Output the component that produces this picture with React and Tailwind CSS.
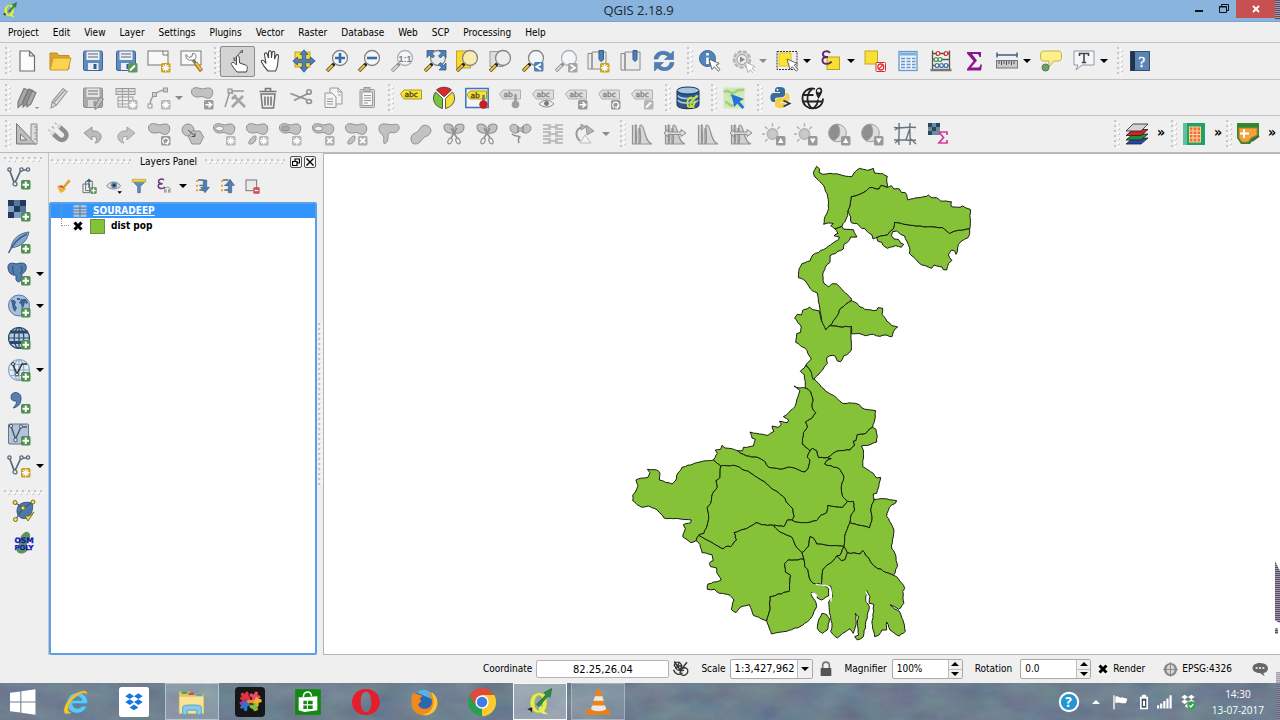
import React from "react";

/* ---------- shared drawing pieces ---------- */

const Svg = ({ children, className = "size-6" }) => (
  <svg viewBox="0 0 24 24" fill="none" aria-hidden="true" className={`shrink-0 ${className}`}>
    {children}
  </svg>
);

const G = "#c2c2c2";
const GD = "#8f8f8f";
const BL = "#4f7fb5";

const blobPath =
  "M1.500 6.500C1 1.500 6 .8 10 2.500c4 1.500 6-1.200 9.500-.5C24 3 23.500 10 20 12c-4 1.500-6-2-9-1.500-3 1-8.500 1-9.500-4Z";

const Badge = ({ fill = "#9a9a9a", x = 14, y = 14, children }) => (
  <g transform={`translate(${x} ${y})`}>
    <rect width="9.500" height="9.500" rx="1.500" fill={fill} />
    {children}
  </g>
);
const Star = ({ fill = "#fff" }) => (
  <path d="M4.750 1v7.500M1 4.750h7.500M2.100 2.100l5.300 5.300M7.400 2.100 2.100 7.400" stroke={fill} strokeWidth="1.300" />
);
const Plus = () => (
  <Badge fill="#4f8f51">
    <path d="M4.750 1.500v6.500M1.500 4.750H8" stroke="#fff" strokeWidth="2" />
  </Badge>
);
const GStar = () => <Badge fill="#b5b5b5"><Star /></Badge>;
const YStar = () => <Badge fill="#c9a21e"><Star /></Badge>;
const GX = () => <Badge fill="#b0b0b0"><path d="m2.200 2.200 5 5m0-5-5 5" stroke="#fff" strokeWidth="1.900" /></Badge>;
const GRight = () => <Badge><path d="M1.500 4.750H7M4.500 2l3 2.750-3 2.750" stroke="#fff" strokeWidth="1.600" /></Badge>;
const GRot = () => <Badge><path d="M3 7.500a3 3 0 1 1 3.500 0M6.800 4.800 6.300 8 3.800 7" stroke="#fff" strokeWidth="1.200" /></Badge>;
const GTri = ({ down }) => (
  <Badge><path d={down ? "M2 2.500h5.500L4.750 7.500Z" : "M2 7h5.500L4.750 2Z"} fill="#fff" /></Badge>
);
const Blob = ({ t }) => <path d={blobPath} transform={t} fill={G} stroke={GD} />;

const Mag = ({ grey, lens = "#f3f6f9" }) => (
  <>
    <path d="m9 15-7 7" stroke={grey ? "#8d8d8d" : "#5c4a22"} strokeWidth="3.600" />
    <path d="m8 16-5.600 5.600" stroke={grey ? "#d7d7d7" : "#eec23d"} strokeWidth="2" />
    <path d="m9.300 14.700-1.600 1.600" stroke={grey ? "#8d8d8d" : "#222"} strokeWidth="3" />
    <circle cx="15" cy="9" r="7.500" fill={lens} stroke={grey ? "#b0b0b0" : "#858585"} strokeWidth="1.300" />
  </>
);
const Cursor = ({ x = 11, y = 10, fill = "#fff", stroke = "#555" }) => (
  <path d={`M${x} ${y}l3 10.500 2.300-2.800 4 4.500 1.700-1.600-4-4.400 3.200-1.700Z`} fill={fill} stroke={stroke} strokeWidth=".9" />
);
const Node3 = ({ c = "#586879" }) => (
  <g stroke={c} strokeWidth="1.200">
    <path d="m2.500 4 5 13.500L14 4h7" strokeWidth="1.700" />
    <circle cx="2.500" cy="3.500" r="1.700" fill="#dfe7ef" />
    <circle cx="8" cy="18" r="2" fill="#dfe7ef" />
    <circle cx="14.500" cy="3.500" r="1.700" fill="#dfe7ef" />
    <circle cx="21" cy="3.500" r="1.700" fill="#dfe7ef" />
  </g>
);
const Floppy = ({ grey }) => (
  <>
    <rect x="2.500" y="2" width="19" height="19.500" rx="1.500" fill={grey ? "#a9a9a9" : "#5f8cc0"} stroke={grey ? "#909090" : "#3f6795"} />
    <rect x="5.500" y="2.500" width="13" height="8.500" fill={grey ? "#e4e4e4" : "#edf0f3"} />
    <path d="M7 5h10M7 8h10" stroke={grey ? "#999" : "#8a929b"} strokeWidth="1.300" />
    <rect x="7" y="14" width="10.500" height="7" fill={grey ? "#d8d8d8" : "#e9eef4"} />
    <rect x="12.500" y="15" width="3" height="5" fill={grey ? "#999" : "#345b88"} />
  </>
);
const Tag = ({ grey, s = "abc" }) => (
  <>
    <path d="M1.500 8 5 4h17.500v9H5Z" fill={grey ? "#dedede" : "#f7e338"} stroke={grey ? "#b0b0b0" : "#b19b17"} />
    <text x="5.500" y="11" fontSize="7.500" fontFamily="DejaVu Sans, sans-serif" fill={grey ? "#7d7d7d" : "#463f12"} stroke={grey ? "#7d7d7d" : "#463f12"} strokeWidth=".3">{s}</text>
  </>
);
const Globe = ({ fill = "#dbe6f1", line = "#486a91" }) => (
  <g stroke={line} strokeWidth="1.200">
    <circle cx="12" cy="12" r="10.500" fill={fill} />
    <ellipse cx="12" cy="12" rx="4.800" ry="10.500" />
    <path d="M1.500 12h21M3.500 6.500h17M3.500 17.500h17M12 1.500v21" />
  </g>
);
const Sheet = ({ color = "#f8f8f8" }) => <rect x="1" y="2" width="20" height="14" fill={color} stroke="#777" />;
const Scissors = () => (
  <g fill={G} stroke={GD} strokeWidth="1.100">
    <path d="M2 5c0-4 7-4 9 0l1 6c-4 1-10-1-10-6ZM22 5c0-4-7-4-9 0l0 6c4 1 9-1 9-6Z" />
    <path d="m15 6-6 10M9 6l6 10" strokeWidth="1.600" />
    <ellipse cx="8" cy="19" rx="2" ry="3" transform="rotate(25 8 19)" fill="#efefef" />
    <ellipse cx="16" cy="19" rx="2" ry="3" transform="rotate(-25 16 19)" fill="#efefef" />
  </g>
);
const Histo = ({ arrows }) => (
  <>
    <path d="M2 22V3h5l2 6 2-6c4 0 3 16 11 19Z" fill={arrows ? "#cfcfcf" : "#d6d6d6"} />
    <path d="M2.500 22V3M5.500 22V2.500M9 22V6M2 22h20M10 22C12 12 8 3 11 3c4 0 3 17 11 19M6 22C8 12 4 3 7 3" stroke="#939393" strokeWidth="1.200" />
    {arrows && <path d="m1 11 4-3.500V10h13V7.500l5 3.500-5 3.500V12.500H5v2.500Z" fill="#dedede" stroke="#8d8d8d" />}
  </>
);
const Sun = () => (
  <g stroke="#b3b3b3" strokeWidth="1.500">
    <circle cx="10.500" cy="12" r="5.200" fill="#c9c9c9" />
    <path d="M10.500 1v3.500M0 12h3M3 4.500 5.500 7M18 4.500 15.500 7M3 19.500 5.500 17" />
  </g>
);
const Contrast = () => (
  <g stroke="#a0a0a0">
    <circle cx="10.500" cy="11" r="8.800" fill="#ddd" />
    <path d="M10.500 2.200a8.800 8.800 0 0 0-4 16.500C14 15 14 8 10.500 2.200Z" fill="#8e8e8e" />
  </g>
);

/* ---------- toolbar icons ---------- */

const icons = {
  new: <path d="M5 2h9.500L19.500 7v15H5ZM14.500 2v5h5" fill="#fcfcfc" stroke="#6f6f6f" strokeWidth="1.200" />,
  open: (
    <>
      <path d="M2 20V4h7l2 2.500h10V20Z" fill="#dba52a" stroke="#be8d1f" />
      <path d="M2 21 5 9h18l-3 12Z" fill="#fad44f" stroke="#c9962a" />
    </>
  ),
  save: <Floppy />,
  saveAs: <><Floppy /><Badge fill="#5b965d"><path d="m2 7.500 5-5" stroke="#fff" strokeWidth="2" /></Badge></>,
  layoutNew: <><Sheet /><path d="M16 2v4h5" stroke="#777" /><YStar /></>,
  layoutMgr: (
    <>
      <Sheet />
      <path d="M6 5.500 9 8.500l3-1 .5-3c4-.5 4 4 2.500 6l-2.500.5c-5 1-7-2-6.500-5.500Z" fill="#fff" stroke="#777" />
      <path d="m13 11 3 3.500" stroke="#777" strokeWidth="3" />
      <path d="m15.500 14 6 8" stroke="#a97922" strokeWidth="4" />
      <path d="m16 14 5 6.800" stroke="#efc047" strokeWidth="2" />
    </>
  ),
  touch: (
    <>
      <path d="M10 22 6 17c-1-2-2.500-3.500-1-4.500 1.500-.7 3 1 4.500 2.500V7c0-2 2.400-2 2.600 0l.6 6 5.800 2c2.500.8 2 3.500 1 7Z" transform="translate(2 1)" fill="#fff" stroke="#444" />
      <path d="M17 1 9 11M15 3.500h2.500V1M9 8v3.500h3" stroke="#555" strokeWidth=".9" />
    </>
  ),
  pan: (
    <path d="M9 22c-3-3-5-6-6.500-9-.8-2 1.500-2.500 3-.5l1.500 2-1.500-9c0-2 2.200-2.300 2.800-.3L9.500 9V3.500c0-2.200 2.700-2.200 2.900 0V9l.8-5.500c.5-2 2.700-1.500 2.600.4L15.500 10 17 6.500c.8-1.700 2.800-1 2.500 1L18.500 16c-.3 3-1 4-2 6Z" fill="#fff" stroke="#444" strokeWidth="1.100" />
  ),
  panSel: (
    <>
      <rect x="3" y="3" width="15" height="15" fill="#f8dc36" stroke="#c0a11d" />
      <path d="m12 .8 4 4.700h-2.300v4.800h4.800V8l4.700 4-4.700 4v-2.300h-4.800v4.800H16L12 23.200l-4-4.700h2.300v-4.800H5.500V16L.8 12l4.700-4v2.300h4.800V5.500H8Z" fill={BL} stroke="#2e5787" strokeWidth=".8" />
    </>
  ),
  zoomIn: <><Mag /><path d="M15 4v10M10 9h10" stroke="#386ca8" strokeWidth="2.600" /></>,
  zoomOut: <><Mag /><path d="M10 9h10" stroke="#386ca8" strokeWidth="2.600" /></>,
  zoomNative: <><Mag grey /><text x="8.500" y="12.500" fontSize="9" fontWeight="bold" fontFamily="Liberation Sans, sans-serif" fill="#7a7a7a">1:1</text></>,
  zoomFull: (
    <>
      <Mag lens="#e8ebee" />
      <path d="M4 1.500h7L8.500 4l3 3-2 2-3-3L4 8.500ZM23 1.500v7L20.500 6l-3 3-2-2 3-3L16 1.500ZM23 21h-7l2.500-2.500-3-3 2-2 3 3L23 14Z" fill={BL} stroke="#315b8d" strokeWidth=".8" />
    </>
  ),
  zoomSel: <><rect x="1.500" y="2" width="14" height="17" fill="#f7d932" stroke="#c3a51f" /><Mag lens="#f6ecb0" /></>,
  zoomLayer: <><rect x="2" y="2.500" width="13" height="15" fill="#dedede" stroke="#9c9c9c" /><Mag lens="#ededed" /></>,
  zoomLast: <><Mag /><Badge fill={BL} x={13} y={13}><path d="M7 1.800 2.500 4.750 7 7.700" stroke="#fff" strokeWidth="2" /></Badge></>,
  zoomNext: <><Mag grey /><Badge fill="#a5a5a5"><path d="M2.500 1.800 7 4.750 2.500 7.700" stroke="#fff" strokeWidth="1.800" /></Badge></>,
  bookmarkNew: (
    <>
      <path d="M2 4.500h4V20H2ZM6 3h14v17H6Z" fill="#ececec" stroke="#888" />
      <path d="M13 1.500h4.500v9L15.200 12.500 13 10.500Z" fill={BL} stroke="#2f5b8f" />
      <YStar />
    </>
  ),
  bookmarks: (
    <>
      <path d="M2 4.500h4V21H2ZM6 3h15v18H6Z" fill="#ececec" stroke="#888" />
      <path d="M14 1.500h4v9L16 12.500l-2-2Z" fill={BL} stroke="#2f5b8f" />
    </>
  ),
  refresh: (
    <path d="M2 10C3 1 14 .5 18.500 5L21.500 2v8.500h-9L16 7.500C12 4 7 5 6 10ZM22 13.500c-1 9-12 10-16.500 5.500L2.500 22v-8.500h9L8 16.500c4 3.500 9 2.500 10-3Z" fill={BL} stroke="#3f6d9f" strokeWidth=".6" />
  ),
  identify: (
    <>
      <circle cx="9.500" cy="9.500" r="8" fill="#5284bd" stroke="#3b6797" />
      <path d="M9.500 8.500V15M9.500 4v2.500" stroke="#fff" strokeWidth="2.600" />
      <Cursor x={11} y={10} />
    </>
  ),
  action: (
    <>
      <circle cx="11" cy="10.500" r="8" fill="#d9d9d9" stroke="#b5b5b5" strokeWidth="2.500" strokeDasharray="4 1.500" />
      <circle cx="11" cy="10.500" r="5" fill="#eee" stroke="#999" />
      <path d="m9 7.500 5 3-5 3Z" fill="#888" />
      <Cursor x={14} y={13} stroke="#aaa" />
    </>
  ),
  select: (
    <>
      <rect x="2" y="2.500" width="20" height="18" stroke="#333" strokeDasharray="2 1" />
      <rect x="4" y="4" width="12" height="13" fill="#fbe435" stroke="#e0c521" />
      <Cursor x={12} y={10} />
    </>
  ),
  selectExpr: (
    <>
      <rect x="8" y="8" width="12.500" height="12.500" fill="#f8df38" stroke="#bfa01e" />
      <path d="M11 4C9 1 3 2 4 6c.5 2 3 2 5 2-4 0-6 1-5.500 4 .5 4 7 3.500 9 .500" stroke="#5b2a6e" strokeWidth="1.900" />
    </>
  ),
  deselect: (
    <>
      <rect x="2" y="2" width="12.500" height="13" fill="#f8df38" stroke="#c9a81e" />
      <rect x="13" y="13.500" width="9.500" height="9" rx="1" fill="#fff" stroke="#c33" />
      <circle cx="17.800" cy="18" r="3" stroke="#d33" strokeWidth="1.300" />
      <path d="m15.500 20 4.500-4" stroke="#d33" strokeWidth="1.300" />
    </>
  ),
  table: (
    <>
      <rect x="3" y="2.500" width="18" height="19" fill="#eaf2fa" stroke="#6b98c6" strokeWidth="1.300" />
      <path d="M4 5h16" stroke="#7fb0dd" strokeWidth="3" />
      <path d="M5 9.500h4M10.500 9.500h4M16 9.500h3.500M5 12.500h4M10.500 12.500h4M16 12.500h3.500M5 15.500h4M10.500 15.500h4M16 15.500h3.500M5 18.500h4M10.500 18.500h4M16 18.500h3.500" stroke="#6b98c6" strokeWidth="1.300" />
    </>
  ),
  calc: (
    <>
      <path d="M3.500 1.500V20M20.500 1.500V20M3.500 4.500h17M3.500 10.500h17M3.500 16.500h17" stroke="#555" strokeWidth="1.300" />
      <path d="M1.500 21h21" stroke="#777" strokeWidth="2.500" />
      <g fill="#fff" strokeWidth="1.300">
        <g stroke="#c33"><circle cx="9" cy="4.500" r="1.900" /><circle cx="17" cy="4.500" r="1.900" /></g>
        <g stroke="#4a9a4a"><circle cx="7" cy="10.500" r="1.900" /><circle cx="11" cy="10.500" r="1.900" /></g>
        <g stroke="#4474a8"><circle cx="8" cy="16.500" r="1.900" /><circle cx="12.500" cy="16.500" r="1.900" /><circle cx="17" cy="16.500" r="1.900" /></g>
      </g>
    </>
  ),
  sum: <path d="M5 3h14v5h-1.500C17 5.500 16 5 14 5h-4l5 6.500L9 18.500h6c2 0 3-.5 3.500-3H20l-1 6H5V20l6.500-8L5 4.500Z" fill="#8c1490" />,
  measure: (
    <>
      <path d="M2 6h20M2 3.500v5M22 3.500v5" stroke="#3d6187" strokeWidth="1.500" />
      <rect x="1.500" y="11.500" width="21" height="7.500" fill="#c9c9c9" stroke="#777" />
      <path d="M4 12v3M6.500 12v4M9 12v3M11.500 12v4M14 12v3M16.500 12v4M19 12v3" stroke="#555" />
    </>
  ),
  tip: (
    <>
      <path d="M5 2h14c3 0 3.500 1.500 3.500 5s-.5 5-3.500 5h-4l-5 6v-6H5c-3 0-3.500-1.500-3.500-5S2 2 5 2Z" fill="#fdf08c" stroke="#c8b24a" />
      <circle cx="6.500" cy="18.500" r="3.500" fill="#739d6c" stroke="#4f7a52" />
    </>
  ),
  text: (
    <>
      <path d="M2 2h20v14H10l-6 5 2-5H2Z" fill="#f4f6f8" stroke="#8d99a5" />
      <path d="M7.500 7V4.500h9V7M12 4.500v9M9.800 13.500h4.400" stroke="#444" strokeWidth="1.600" />
    </>
  ),
  help: (
    <>
      <rect x="2.500" y="2.500" width="19" height="19" fill="#5b84b5" stroke="#33506f" />
      <path d="M2.500 2.500H7v19H2.500Z" fill="#22344b" />
      <text x="10.500" y="17.500" fontSize="15" fontFamily="Liberation Serif, serif" fill="#fff" stroke="#fff" strokeWidth=".4">?</text>
    </>
  ),
  edits: (
    <g stroke="#777" strokeWidth="1.100">
      <path d="M3 16 9 2.500l4 1.500L7 18l-4 3.500Z" fill="#a9a9a9" />
      <path d="m8 16 6-13 4 1.500L12 18l-4 3Z" fill="#929292" />
      <path d="m12 16 5-11 4 1.500L16 18l-4 3Z" fill="#aaa" />
      <path d="M20 21h4l-2 2Z" fill="#888" stroke="none" />
    </g>
  ),
  pencil: <path d="M4 16 15 2.500l4 3L8.500 19 3 22ZM4 16l4.500 3M6 16.500 17 4" fill="#e0e0e0" stroke="#9c9c9c" strokeWidth="1.200" />,
  saveEdits: <><Floppy grey /><path d="m14 20 5-9 3.500 2-5 8-3.500 2.500Z" fill="#bbb" stroke="#888" /></>,
  addRow: (
    <>
      <rect x="2" y="2.500" width="19" height="6" fill="#ddd" stroke="#999" />
      <rect x="4" y="11" width="15" height="10" fill="#eee" stroke="#999" />
      <path d="M3 5.500h17M8.500 3v18M14.500 3v18M4 14.500h15M4 18h15" stroke="#a4a4a4" />
      <GStar />
    </>
  ),
  addCurve: (
    <>
      <path d="M3 20C3 11 9 5 18 4" stroke="#a0a0a0" strokeWidth="1.600" />
      <rect x="1" y="18" width="4" height="4" fill="#eee" stroke="#999" />
      <rect x="16.500" y="2" width="4" height="4" fill="#ccc" stroke="#999" />
      <rect x="5.500" y="6.500" width="4" height="4" fill="#ccc" stroke="#999" />
      <GStar />
    </>
  ),
  moveFeature: <><Blob /><GRight /></>,
  nodeTool: (
    <>
      <path d="m2 21 5-16h14M7 5l3 3" stroke="#999" strokeWidth="1.500" />
      <rect x="5" y="3" width="4" height="4" fill="#ddd" stroke="#888" />
      <path d="m9 21 11-11M11 10l11 11M9 13l4-4" stroke="#a5a5a5" strokeWidth="2.600" />
    </>
  ),
  trash: (
    <>
      <path d="M5 8h14l-1.500 14h-11Z" fill="#eee" stroke="#777" strokeWidth="1.500" />
      <path d="M3.500 5.500h17M9.500 5V2.500h5V5M9 10.500v9M12 10.500v9M15 10.500v9" stroke="#777" strokeWidth="1.600" />
    </>
  ),
  cut: (
    <g stroke="#909090" strokeWidth="1.600">
      <path d="m1.500 7.500 16 6M5 14.500 20 7" />
      <circle cx="20" cy="6" r="2.200" fill="#eee" />
      <ellipse cx="20" cy="15.500" rx="2.500" ry="2" fill="#eee" />
    </g>
  ),
  copy: (
    <g stroke="#999">
      <path d="M8 2h8l4 4v12H8Z" fill="#f3f3f3" />
      <path d="M3 7h7l4 4v10.500H3Z" fill="#f3f3f3" />
      <path d="M5 13h6M5 15.500h6M5 18h6M16 2v4h4M16 9h2.500" />
    </g>
  ),
  paste: (
    <g stroke="#999">
      <rect x="5" y="3.500" width="14.500" height="18" rx="1" fill="#d9d9d9" />
      <rect x="7" y="6" width="10.500" height="13.500" fill="#f6f6f6" />
      <path d="M9 9.500h7M9 12h7M9 14.500h7M9 17h4" />
      <rect x="9" y="1.500" width="6" height="4" fill="#bbb" />
    </g>
  ),
  label: <Tag />,
  diagram: (
    <g stroke="#333" strokeWidth=".8">
      <circle cx="12" cy="12" r="11" fill="#fff" stroke="none" />
      <path d="M11.500 10.500 4.500 4C8 .3 16 .3 19.500 4L12.500 10.500Z" fill="#e0262a" />
      <path d="M10.500 12.500 3.500 6C-1 12 2 20.500 10.500 22.500Z" fill="#75c83a" />
      <path d="M13.500 12.500 20.500 6C25 12 22 20.500 13.500 22.500Z" fill="#f4df32" />
    </g>
  ),
  labelPin: (
    <>
      <rect x=".8" y="2.500" width="22.400" height="19" fill="#f2f4f6" stroke="#3c75b8" strokeWidth="1.500" />
      <path d="M2 9 5 5h16.500v8H5Z" fill="#f7e338" stroke="#b19b17" />
      <text x="5.500" y="11.800" fontSize="7.500" fontFamily="DejaVu Sans, sans-serif" fill="#463f12" stroke="#463f12" strokeWidth=".3">ab</text>
      <path d="M18.500 9v7" stroke="#777" strokeWidth="2.500" />
      <circle cx="18.500" cy="18.500" r="4.200" fill="#c51f24" />
    </>
  ),
  labelHold: <><Tag grey s="ab" /><path d="M17.500 8v8" stroke="#999" strokeWidth="2.500" /><circle cx="17.500" cy="18.500" r="3.800" fill="#a0a0a0" /></>,
  labelShow: <><Tag grey /><path d="M8 18c4-5 11-5 15 0-4 4-11 4-15 0Z" fill="#eee" stroke="#888" /><circle cx="15.500" cy="17.500" r="2.400" fill="#777" /></>,
  labelMove: <><Tag grey /><GRight /></>,
  labelRot: <><Tag grey /><GRot /></>,
  labelEdit: <><Tag grey /><Badge fill="#b5b5b5"><path d="m2 7.500 5-5" stroke="#fff" strokeWidth="2" /></Badge></>,
  database: (
    <>
      <path d="M1 5v14c0 5 22 5 22 0V5" fill="#2f5688" stroke="#16304f" />
      <path d="M2 9.500c1 4 19 4 20 0M2 14c1 4 19 4 20 0" stroke="#a9c9e8" strokeWidth="1.600" />
      <ellipse cx="12" cy="4.500" rx="11" ry="3.500" fill="#9fc6e8" stroke="#16304f" />
      <path d="M16 11.500c-4.500 0-5.500 5-4 9 3.500 2 7-1.500 7-6M13.500 18.500c2 0 2 3 5 3M14 17l7-7.500" stroke="#c8e336" strokeWidth="1.900" />
    </>
  ),
  coordinate: (
    <>
      <rect x="1.500" y="1.500" width="21" height="21" fill="#cfe8b5" />
      <path d="M2 6c5-4 7 4 11 0s7 0 9-3M3 16c4 0 4 5 9 3M8 10c4-2 4 4 8 1" stroke="#9fd07d" strokeWidth="2.500" />
      <path d="m9 8 3.500 13 2.800-3.500 5 5.500 2-2-4.800-5.500L22 13Z" fill="#2373dd" />
    </>
  ),
  python: (
    <>
      <path d="M12 1C6.500 1 7 3 7 6h5v1H5C1.500 7 1.500 16 5 16h2v-3c0-3 9 0 10-4V4c0-2-2-3-5-3Z" fill="#386c99" />
      <path d="M12 22c5.500 0 5-2 5-5h-5v-1h7c3.500 0 3.500-9 0-9h-1.500v3c0 3.500-9 .500-10.500 4v5c0 2 2 3 5 3Z" fill="#f5ce48" />
      <circle cx="9.500" cy="3.700" r="1" fill="#fff" />
      <path d="m15.500 14.500 6 3-6 3" stroke="#333" strokeWidth="1.800" />
    </>
  ),
  webGlobe: (
    <g stroke="#222" strokeWidth="1.800">
      <path d="M14 3C7 1 1.500 6 1.500 12.500c0 13 20.500 13.500 20.500 0" />
      <path d="M11 3c-7 6-5 15 0 19.500M12 22.500c4-3 5-6 5-9M2.500 9h10M2 15.500h20" />
      <path d="M17.500 13c-7-11 1.500-13 3-10.500 2 3-.5 6-3 10.500Z" fill="#222" stroke="none" />
      <circle cx="17.800" cy="4.800" r="1.800" fill="#eee" stroke="none" />
    </g>
  ),
  setSquare: (
    <>
      <path d="M1.500 1.500 21 22H1.500ZM5.500 12v6h6Z" fill="#bdbdbd" fillRule="evenodd" stroke="#777" />
      <path d="M16 2h6v20h-2L16 17ZM19 5h3M20 8h2M19 11h3M20 14h2M19 17h3" fill="#ddd" stroke="#8d8d8d" />
    </>
  ),
  magnet: (
    <g transform="rotate(-48 12 12)">
      <path d="M7.500 7v7a4.800 4.800 0 0 0 9.600 0V7" stroke="#8e8e8e" strokeWidth="4.500" />
      <path d="M5.200 6h4.600M14.800 6h4.600" stroke="#dadada" strokeWidth="3" />
      <path d="M7.500.5V3M17 .5V3M12.200 1v3" stroke="#aaa" strokeWidth="1.200" />
    </g>
  ),
  undo: <path d="m3 11 8-6v4c8-1 11 5 8 9-1 2-3 3-5 3 3-4 2-7-3-6.500V18Z" fill="#bbb" stroke="#999" />,
  redo: <path d="m21 11-8-6v4c-8-1-11 5-8 9 1 2 3 3 5 3-3-4-2-7 3-6.500V18Z" fill="#c3c3c3" stroke="#a3a3a3" />,
  rotateF: <><Blob /><GRot /></>,
  simplify: (
    <g fill={G} stroke={GD}>
      <circle cx="8" cy="8" r="6" />
      <path d="M12 9h8l3.500 6-3.500 7h-8l-3.500-7Z" />
      <path d="m8 8 7 6m0-3v3.500h-3.500" stroke="#555" />
    </g>
  ),
  addRing: <><Blob /><ellipse cx="7.500" cy="6.500" rx="4" ry="2.500" fill="#efefef" stroke={GD} /><GStar /></>,
  addPart: <><Blob /><path d="M4 20c-2 4 7 2 7-4 1-5-6 0-7 4Z" fill={G} stroke={GD} /><GStar /></>,
  fillRing: <><Blob /><ellipse cx="7.500" cy="6.500" rx="4" ry="2.500" fill="#aaa" stroke={GD} /><GStar /></>,
  delRing: <><Blob /><ellipse cx="7.500" cy="6.500" rx="4" ry="2.500" fill="#efefef" stroke={GD} /><GX /></>,
  delPart: <><Blob /><path d="M4 20c-2 4 7 2 7-4 1-5-6 0-7 4Z" fill={G} stroke={GD} /><GX /></>,
  reshape: <path d="M2 6.500c0-5.500 6-5 10-4s9-2 10 2-3 7-7 6c-3-.5-4 2-4 5 0 4-2 6-4 6-1-4 1-7-2-9-2-2-3-3-3-6Z" fill={G} stroke={GD} />,
  offset: <path d="M2 17c0-6 5-5 8-9 2-4 5-6 9-4 5 3 3 8-1 10-4 1-4 3-7 6s-9 3-9-3Z" fill={G} stroke={GD} />,
  split: <Scissors />,
  splitParts: <Scissors />,
  merge: (
    <g fill={G} stroke={GD}>
      <path d="M2 6c0-5 7-5 9 0h3c2-5 8-5 9 0 0 5-7 7-9 3h-3c-2 4-9 2-9-3Z" />
      <path d="M4 12c3 3 6 1 8 3-2 1-2 3-1 6M10 4v7M15 4v7" fill="none" strokeWidth="1.500" />
    </g>
  ),
  mergeAttr: (
    <path d="M2 3h8M2 7h8M14 3h8M14 7h8M2 10h8M2 14h8M14 10h8M14 14h8M2 17h8M2 21h8M14 17h8M14 21h8M7 5h10M7 12h10M7 19h10" stroke="#8d8d8d" />
  ),
  rotatePt: (
    <g stroke="#999">
      <path d="M7 19C1 13 3 6 10 5" strokeWidth="2" />
      <path d="m8 2 5 3-5 3ZM13 3l8 6-7 4Z" fill="#b5b5b5" />
      <path d="m12 13 6 8H7Z" fill="#f2f2f2" stroke="#bbb" />
    </g>
  ),
  histo: <Histo />,
  histoFull: <Histo arrows />,
  histo2: <Histo />,
  histoFull2: <Histo arrows />,
  brightUp: <><Sun /><GTri /></>,
  brightDown: <><Sun /><GTri down /></>,
  contrastUp: <><Contrast /><GTri /></>,
  contrastDown: <><Contrast /><GTri down /></>,
  grid: <path d="M6 1c1 9-1 14 0 22M17 1c-1 9 1 14 0 22M1 5.500c9 1 14-1 22 0M1 18c9-1 14 1 22 0M2 21l4-3M18 17l5 5M7 5l-5 3M17 6l-4 12" stroke="#67737e" strokeWidth="1.400" />,
  zonal: (
    <>
      <path d="M2 1h12v12H2Z" fill="#6f8a9c" />
      <path d="M2 1h4v4H2ZM10 1h4v4h-4ZM6 5h4v4H6ZM2 9h4v4H2Z" fill="#24485f" />
      <path d="M13 10h8v3M13 10l4.500 5.500L13 21h8v-3" stroke="#d63a9b" strokeWidth="1.700" />
    </>
  ),
  layers: (
    <g stroke="#222" strokeWidth=".8">
      <path d="m1 22 7-6h15l-7 6Z" fill="#2348ae" />
      <path d="m1 18 7-6h15l-7 6Z" fill="#248b37" />
      <path d="m1 13.500 7-6h15l-7 6Z" fill="#cf2222" />
      <path d="m1 9 7-7h15l-7 7Z" fill="#d3d3d3" />
    </g>
  ),
  raster: (
    <>
      <rect x="1" y="1" width="22" height="22" fill="#20a06e" />
      <path d="M1 1h4v22H1Z" fill="#5fc09b" />
      <rect x="7.500" y="5" width="11" height="15" fill="#ef6f3c" stroke="#ffd36b" />
      <path d="M11 5v15M15 5v15M8 9h11M8 12.500h11M8 16h11" stroke="#ffd9a0" />
    </>
  ),
  semiAuto: (
    <>
      <path d="M1 1h22v13l-6 4-3 4H5l-4-6Z" fill="#2a8a35" />
      <path d="M3 6h18v7l-6 3-3 4H6l-3-4Z" fill="#f0a43c" stroke="#c97a20" />
      <path d="M8 7v9M4 11.500h9" stroke="#fff" strokeWidth="1.800" />
      <path d="m16 19 7-5" stroke="#555" strokeWidth="2" />
    </>
  ),
};

const sideIcons = [
  ["Add vector layer", <><Node3 /><Plus /></>],
  ["Add raster layer", (
    <>
      <path d="M1 2h18v18H1Z" fill="#7fa0c8" />
      <path d="M1 2h6v6H1ZM13 2h6v6h-6ZM7 8h6v6H7ZM1 14h6v6H1Z" fill="#23395a" />
      <path d="M7 2h6v6H7ZM13 8h6v6h-6Z" fill="#52769f" />
      <Plus />
    </>
  )],
  ["Add SpatiaLite layer", (
    <>
      <path d="M4 18C5 9 12 3 22 2c-1 4-2 7-5 10-4 4-8 5-13 6Z" fill="#86a6cd" stroke="#4c6d95" />
      <path d="M1.500 23C5 15 11 8 20 4" stroke="#3f5f86" strokeWidth="1.400" />
      <Plus />
    </>
  )],
  ["Add PostGIS layer", (
    <>
      <path d="M1 5c0-5 6-4 8-3 3-1 10-2 10 2 1 4-2 7-4 8l-1 6c-1 3-5 2-5-1v-4c-5 1-8-3-8-8Z" fill="#557faf" stroke="#2d5079" />
      <path d="M6 4c-1 4 0 6 1 8M14 4c2 3 1 6-1 8" stroke="#294a70" />
      <Plus />
    </>
  ), true],
  ["Add MSSQL layer", (
    <>
      <circle cx="12" cy="11.500" r="10.500" fill="#a6bfdd" stroke="#5578a3" />
      <path d="M4 6h3l2 2-1 3 2 3-2 4-2-3ZM10 4h3v2h-3ZM14 5h5l2 4-2 1-1-2-1 4-2 3-1-5-2-1Z" fill="#3c628f" />
      <Plus />
    </>
  ), true],
  ["Add WMS layer", <><Globe fill="#b7cce4" line="#2b4868" /><path d="M3 6h18M3 16.500h18" stroke="#2b4868" strokeWidth="3" /><Plus /></>],
  ["Add WFS layer", <><Globe fill="#e5eef8" line="#8eabc9" /><path d="m6 7 4 9 5-10h5" stroke="#333" strokeWidth="1.600" /><circle cx="6" cy="6" r="1.500" fill="#fff" stroke="#333" /><circle cx="10" cy="16.500" r="1.500" fill="#fff" stroke="#333" /><Plus /></>, true],
  ["Add delimited text layer", <><path d="M4 7c0-6 10-6 10 1 0 6-3 9-8 10 3-3 4-5 3-7-3 0-5-1-5-4Z" fill="#587fae" stroke="#34587f" /><Plus /></>],
  ["Add virtual layer", (
    <>
      <rect x="1.500" y="2" width="20" height="20" rx="1" fill="#b4c4d8" stroke="#62758c" />
      <path d="m4 4 4.500 13L14 5h6" stroke="#4b5a6b" strokeWidth="1.500" />
      <circle cx="4" cy="4" r="1.600" fill="#dde6f0" stroke="#4b5a6b" />
      <circle cx="8.500" cy="18" r="1.800" fill="#dde6f0" stroke="#4b5a6b" />
      <circle cx="14" cy="4.500" r="1.600" fill="#dde6f0" stroke="#4b5a6b" />
      <Plus />
    </>
  )],
  ["New shapefile layer", <><Node3 /><YStar /></>, true],
];

const pluginIcons = [
  ["Topology checker", (
    <>
      <path d="M5 12C5 4 13 2 20 4c2 6-1 12-5 15-6 2-10-2-10-7Z" fill="#4b79ac" stroke="#34597f" />
      <path d="M3 3.500 11 9l10-6M11 9 4 20" stroke="#46535f" strokeWidth="1.200" />
      <path d="m13 17 3 5 6-9-5 4Z" fill="#f0d860" stroke="#7d6d1e" />
      <g fill="#f1df6c" stroke="#7d6d1e"><circle cx="3" cy="3.500" r="2" /><circle cx="11" cy="9" r="2" /><circle cx="21" cy="3" r="2" /><circle cx="3.500" cy="20.500" r="2" /></g>
    </>
  )],
  ["OSM polygons", (
    <>
      <path d="M12 2c3-3 7 0 6 4 0 4-4 5-3 9 3 5-4 9-8 7-5-2 0-6 0-10s2-8 5-10Z" fill="#5b9657" />
      <text x="12" y="11.500" textAnchor="middle" fontSize="7.500" fontWeight="bold" fontFamily="DejaVu Sans, sans-serif" fill="#1414b8" stroke="#1414b8" strokeWidth=".3">OSM</text>
      <text x="12" y="18.500" textAnchor="middle" fontSize="6.800" fontWeight="bold" fontFamily="DejaVu Sans, sans-serif" fill="#1414b8" stroke="#1414b8" strokeWidth=".3">POLY</text>
    </>
  )],
];

/* ---------- toolbar layout ---------- */

const Caret = ({ grey }) => (
  <svg viewBox="0 0 8 4" aria-hidden="true" className="h-1 w-2 shrink-0">
    <path d="M0 0h8L4 4Z" fill={grey ? "#8a8a8a" : "#000"} />
  </svg>
);

const dots =
  "bg-[radial-gradient(circle_at_1px_1px,#c6c6c6_1px,transparent_1px),radial-gradient(circle_at_4px_3px,#fff_1px,transparent_1px),radial-gradient(circle_at_5px_4px,#cfcfcf_1px,transparent_1px)]";
const GripV = () => <span className={`h-7 w-[6px] shrink-0 bg-[length:6px_5px] ${dots}`} />;
const GripH = ({ className = "" }) => <span className={`h-[5px] shrink-0 bg-[length:6px_5px] ${dots} ${className}`} />;

const Tools = ({ names, className }) => (
  <div className={`flex shrink-0 items-center ${className}`}>
    {names.split(" ").map((n, i) =>
      n === "v" || n === "V" ? (
        <button key={i} aria-label="More options" className="flex w-[11px] shrink-0 items-center justify-start">
          <Caret grey={n === "v"} />
        </button>
      ) : (
        <button
          key={i}
          aria-label={n}
          className={
            n === "touch"
              ? "flex h-[31px] min-w-0 flex-1 items-center justify-center rounded-xs border border-[#8c8c8c] bg-[#d3d3d3]"
              : "flex h-[31px] min-w-0 flex-1 items-center justify-center"
          }
        >
          <Svg>{icons[n]}</Svg>
        </button>
      )
    )}
  </div>
);

const More = () => <button aria-label="Show more" className="w-4 pb-1 text-center text-sm font-bold leading-4">»</button>;

/* ---------- map ---------- */

const north = [
  "110 34 119 42 117 52 128 58 150 55 180 59 216 65 222 54 238 40 262 46 280 40 284 54 308 56 322 64 321 97 303 91 297 102 268 98 252 112 234 120 214 125 211 150 204 168 203 182 186 214 165 222 152 212 160 206 145 204 131 208 135 185 146 160 143 125 131 92 114 74 105 66 100 52",
  "214 125 234 120 252 112 268 98 297 102 303 91 321 97 334 92 342 102 358 102 364 112 376 113 384 135 400 131 440 124 445 120 455 128 470 128 482 138 498 138 514 140 514 155 540 157 548 153 571 163 569 222 545 226 520 230 508 236 500 228 488 218 440 216 420 213 390 211 362 205 344 202 340 222 322 240 302 243 279 252 276 240 262 230 255 221 245 220 232 206 214 203 212 186 204 168 211 150",
  "344 202 362 205 390 211 420 213 440 216 488 218 500 228 508 236 520 230 545 226 569 222 569 235 564 248 545 258 535 268 532 290 528 298 524 288 515 285 505 300 516 316 506 325 500 345 490 344 486 336 462 330 455 340 418 325 405 310 388 295 390 285 374 243 362 238 350 228 338 230 334 242 342 252 356 254 362 264 371 268 364 277 346 272 322 280 308 270 306 262 293 258 290 248 302 243 322 240 340 222",
  "165 222 186 214 190 222 220 224 231 246 212 246 208 256 192 268 190 282 150 302 150 322 140 330 128 360 132 385 146 396 155 387 170 387 190 408 214 430 214 437 182 460 172 482 150 512 137 525 130 520 120 470 115 440 112 414 98 408 76 378 55 368 58 340 66 326 90 318 98 300 130 284 176 254 178 246 162 242 174 235",
  "214 437 230 444 240 456 262 464 290 466 294 458 308 460 306 478 320 498 335 512 353 516 340 530 336 545 312 540 300 544 280 538 256 542 240 536 214 536 214 514 180 516 150 512 172 482 182 460",
  "137 525 150 512 180 516 214 514 214 585 206 595 192 602 182 620 172 618 164 602 150 602 140 608 142 625 122 650 100 674 92 648 78 630 94 612 76 580 47 562 50 536 62 532 64 516 44 490 52 478 64 480 68 466 82 462 88 456 98 464 118 468 128 505",
];

const south = [
  "558 -15 552 -5 541 4 553 14 556 54 572 66 578 84 576 112 587 128 576 144 556 156 562 172 550 188 546 222 556 232 570 243 578 234 590 242 596 263 622 263 650 244 690 240 704 226 700 214 708 212 712 194 738 190 744 182 758 172 764 150 767 122 754 120 726 114 718 104 706 100 668 100 652 86 625 68 600 45 582 26 572 3",
  "556 54 540 54 522 48 540 62 530 90 525 110 506 128 490 140 506 150 502 158 478 154 484 162 474 172 456 168 462 184 444 196 410 190 390 186 396 204 406 208 400 228 370 232 368 242 352 242 362 250 380 258 412 262 434 274 446 292 480 298 512 292 555 306 564 296 570 270 562 262 570 243 556 232 546 222 550 188 562 172 556 156 576 144 587 128 576 112 578 84 572 66",
  "352 242 335 236 315 234 306 226 302 238 286 240 292 250 280 270 302 288 328 288 342 286 390 308 420 328 446 346 495 385 498 395 518 416 522 438 515 450 526 456 560 458 590 452 602 436 620 428 624 406 668 412 682 394 668 380 664 350 672 320 658 296 614 282 620 272 634 266 622 263 596 263 590 242 578 234 570 243 562 262 570 270 564 296 555 306 512 292 480 298 446 292 434 274 412 262 380 258 362 250",
  "280 270 262 272 240 276 186 292 170 316 168 330 156 342 118 330 120 310 110 300 82 298 90 308 84 322 70 324 48 330 54 346 46 366 38 376 38 392 66 412 86 408 112 420 132 444 214 450 212 458 190 464 196 476 188 500 212 518 228 512 236 496 252 490 262 465 266 440 262 412 272 400 278 370 292 352 288 332 300 322 302 288",
  "302 288 300 322 288 332 292 352 278 370 272 400 262 412 266 440 262 465 252 490 236 496 310 537 316 530 332 530 350 510 342 488 380 476 408 458 424 464 460 466 492 470 502 450 515 450 522 438 518 416 498 395 495 385 446 346 420 328 390 308 342 286 328 288",
  "228 512 240 524 246 548 276 554 280 572 268 580 272 590 290 594 290 608 304 630 264 642 262 658 284 658 298 670 330 676 342 690 334 718 348 728 360 712 388 704 400 736 440 752 450 720 450 680 508 664 512 616 496 606 494 580 505 570 552 568 546 548 530 532 514 500 480 486 460 466 424 464 408 458 380 476 342 488 350 510 332 530 316 530 310 537 236 496",
  "440 752 446 768 454 792 500 784 540 770 570 748 590 710 588 698 574 676 574 668 590 674 592 684 604 690 626 678 626 656 614 646 580 640 568 624 564 600 554 590 552 568 505 570 494 580 496 606 512 616 508 664 450 680 450 720",
  "460 466 480 486 514 500 530 532 546 548 566 528 570 500 580 504 590 522 672 530 674 500 690 458 692 440 704 420 700 394 682 394 668 412 624 406 620 428 602 436 590 452 560 458 526 456 515 450 502 450 492 470",
  "546 548 552 568 554 590 564 600 568 624 580 640 604 644 608 600 620 586 640 572 650 558 660 556 672 530 590 522 580 504 570 500 566 528",
  "650 558 664 572 674 570 682 548 672 530 660 556",
  "622 263 634 266 620 272 614 282 658 296 672 320 664 350 668 380 682 394 700 394 704 420 692 440 690 458 748 474 756 450 752 420 762 388 760 372 770 370 782 322 770 324 760 310 728 290 730 240 724 228 750 224 770 216 772 200 768 178 758 172 744 182 738 190 712 194 708 212 700 214 704 226 690 240 650 244",
  "762 388 790 386 830 392 826 400 808 412 800 440 814 462 822 480 820 500 814 528 828 560 832 590 820 616 790 604 760 586 742 560 728 542 720 552 682 548 672 530 674 500 690 458 748 474 756 450 752 420",
  "604 644 632 648 638 680 626 696 628 720 636 760 632 785 652 804 668 790 690 776 700 790 708 764 706 730 716 740 712 760 716 795 704 800 712 810 730 800 748 710 738 694 740 662 750 680 748 700 762 704 756 760 764 800 776 796 786 780 800 780 800 756 810 780 838 798 856 784 848 748 838 724 822 716 810 704 836 718 852 700 848 664 854 656 846 640 830 620 820 616 790 604 760 586 742 560 728 542 720 552 682 548 674 570 664 572 650 558 640 572 620 586 608 600",
  "606 730 620 734 628 745 622 780 608 790 592 776 598 745",
];

const wobble = (a, b) => {
  const s = Math.sin(a * 12.9898 + b * 78.233) * 43758.5453;
  return (s - Math.floor(s) - 0.5) * 2;
};

/* Splits every long edge with small offsets that depend only on its two ends, so neighbours keep one border. */
const coast = (text) => {
  const n = text.split(" ").map(Number);
  const pts = [];
  for (let i = 0; i < n.length; i += 2) pts.push([n[i], n[i + 1]]);
  const out = [];
  pts.forEach((p, i) => {
    const q = pts[(i + 1) % pts.length];
    const flip = p[0] > q[0] || (p[0] === q[0] && p[1] > q[1]);
    const [a, b] = flip ? [q, p] : [p, q];
    const len = Math.hypot(b[0] - a[0], b[1] - a[1]);
    const steps = Math.max(1, Math.round(len / 9));
    const mids = [];
    for (let k = 1; k < steps; k++) {
      const t = k / steps;
      const x = a[0] + (b[0] - a[0]) * t;
      const y = a[1] + (b[1] - a[1]) * t;
      mids.push([x + wobble(x, y) * 1.6, y + wobble(y, x) * 1.6]);
    }
    if (flip) mids.reverse();
    out.push(p, ...mids);
  });
  return out.map(([x, y]) => `${x.toFixed(1)},${y.toFixed(1)}`).join(" ");
};

const DistrictMap = () => (
  <svg viewBox="324 154 956 500" role="img" aria-label="District map" className="h-full w-full">
    <g fill="#85c237" stroke="#161c12" strokeWidth="3" strokeLinejoin="round">
      <g transform="translate(620 370) scale(.33333)">
        {south.map((p, i) => <polygon key={i} points={coast(p)} />)}
        <path d="M586 642c14 6 30 0 42 8 8 14 8 28 4 44M574 672c8-6 14 0 18 8M738 664c8 12 2 24 4 34" fill="none" stroke="#fff" strokeWidth="4" />
      </g>
      <g transform="translate(780 155) scale(.33333)">
        {north.map((p, i) => <polygon key={i} points={coast(p)} />)}
      </g>
    </g>
  </svg>
);

/* ---------- form pieces ---------- */

const CheckX = ({ label, checked = true }) => (
  <span className="grid size-[11px] shrink-0 place-items-center">
    <input type="checkbox" aria-label={label} defaultChecked={checked} className="col-start-1 row-start-1 size-[11px] appearance-none bg-[#f6f6f6]" />
    <svg viewBox="0 0 10 10" aria-hidden="true" className="pointer-events-none col-start-1 row-start-1 size-[10px]">
      <path d="m1.500 1.500 7 7m0-7-7 7" stroke="#000" strokeWidth="3" />
    </svg>
  </span>
);

const Spin = ({ label, value }) => (
  <div className="flex h-5 w-[71px] rounded-xs border border-[#a9a9a9] bg-white">
    <input aria-label={label} defaultValue={value} className="w-0 min-w-0 flex-1 px-1 outline-none" />
    <div className="flex w-[14px] flex-col border-l border-[#bdbdbd] bg-[#f0f0f0]">
      <button aria-label={`${label} up`} className="flex flex-1 items-center justify-center border-b border-[#bdbdbd]">
        <span className="rotate-180"><Caret /></span>
      </button>
      <button aria-label={`${label} down`} className="flex flex-1 items-center justify-center"><Caret /></button>
    </div>
  </div>
);

/* ---------- taskbar ---------- */

const QgisLogo = () => (
  <>
    <path d="M11.500 4C5.500 4 3.500 9 3.500 13s2.500 8.500 7.500 8.500c5.500 0 7-4.500 7-9 0-4-1.500-8.500-6.500-8.500ZM11 6.500c2.500 0 3 3 3 6.500s-1 6-3 6-3.500-2.500-3.500-6 1.500-6.500 3.500-6.500Z" fill="#e3ee5a" stroke="#a8b83a" strokeWidth=".7" fillRule="evenodd" />
    <path d="M12 15c2 1 3 6 7 7-3 1.500-7 0-8-4Z" fill="#e3ee5a" />
    <path d="m9 14 8.500-8.500-2-1.500L22 .5 20.500 8l-1.600-1.300L11 16Z" fill="#2a8f3c" stroke="#176226" strokeWidth=".6" />
    <path d="m1 18 4.500-1.500L5 21.500l-1-2Z" fill="#222" />
  </>
);

const tasks = [
  ["Internet Explorer", (
    <>
      <path d="M22 13.500H9c.5 4.500 6 5 8 2h4.500c-3 7-10.500 7.500-14.500 4-4.500-4.500-3.500-14 4.500-15.500 7-1 11 4 10.500 9.500ZM9 10.500h8C16.500 6.500 10 6.500 9 10.500Z" fill="#62c8f2" stroke="#2f93cc" strokeWidth=".7" fillRule="evenodd" />
      <path d="M21.500 5.500c.5-4-4-3.500-9-1C5.500 8 .5 17 2 21c1 2 4 1 6 0-3.500 0-4-4-.5-9S18.500 2 21.500 5.500Z" fill="#f5c630" stroke="#d9a21c" strokeWidth=".4" />
    </>
  )],
  ["Dropbox", (
    <>
      <rect width="24" height="24" rx="2" fill="#fff" />
      <path d="m8.500 5 3.500 2.300-3.500 2.300L5 7.300ZM15.500 5 19 7.300l-3.500 2.300L12 7.300ZM8.500 9.700l3.500 2.300-3.500 2.300L5 12ZM15.500 9.700 19 12l-3.500 2.300L12 12ZM12 14l3.500 2.300L12 18.600l-3.500-2.300Z" fill="#1478e0" />
    </>
  )],
  ["File Explorer", (
    <>
      <path d="M1 21V3h9l2 2h10v16Z" fill="#e5c565" />
      <path d="M3 3h5v2H3Z" fill="#3aa44b" /><path d="M9 4h5v2H9Z" fill="#c65252" /><path d="M15 5h6v2h-6Z" fill="#589bd2" />
      <path d="M1 22V7h21v15Z" fill="#f9e396" stroke="#d4b75a" strokeWidth=".6" />
      <path d="M4 23v-7c0-2 16-2 16 0v7h-4v-4H8v4Z" fill="#85cbec" stroke="#4b99c4" strokeWidth=".7" />
    </>
  ), "bg-white/20 border-white/40"],
  ["Splash", (
    <>
      <rect width="24" height="24" rx="3" fill="#161616" />
      <g strokeWidth="2.800" strokeLinecap="round" strokeLinejoin="round">
        <path d="M6 6l5 3M9.500 5v5M5.500 9 9 8" stroke="#e0353d" /><path d="M13 6.500l3 2M17 5l-2 5M19 8l-4 0" stroke="#ec4a6c" />
        <path d="M5 13l5-1M7 11v3" stroke="#9a3fa0" /><path d="M15 12l5-1M17.500 9.500v5" stroke="#f4b52e" />
        <path d="M5.500 16l5-2M8.500 13v5" stroke="#2f75c9" /><path d="M13 15.500l4 2M16 14v4" stroke="#82bd3b" />
        <path d="M11 11.500h3" stroke="#f08d2c" />
      </g>
    </>
  )],
  ["Store", (
    <>
      <rect x="1" y="1" width="22" height="22" fill="#128a12" />
      <path d="M4 8h5l11-1v12l-11 1.500L4 19Z" fill="#fff" />
      <path d="M8 8c0-6 7-6 7-1" stroke="#fff" strokeWidth="1.300" />
      <path d="M8 11h3v3H8ZM12 11h4v3h-4ZM8 15h3v3H8ZM12 15h4v3h-4Z" fill="#128a12" />
    </>
  )],
  ["Opera", <path d="M12 .8C4 .8 0 7 0 12s4 11.200 12 11.200S24 17 24 12 20 .8 12 .8Zm0 2.500c3 0 4.500 4 4.500 8.700s-1.500 8.700-4.500 8.700-4.500-4-4.500-8.700S9 3.300 12 3.300Z" fill="#e41f2d" fillRule="evenodd" />],
  ["Firefox", (
    <>
      <circle cx="13" cy="12" r="10.500" fill="#2c66ad" />
      <path d="M6 4c6-6 15-1 14 6" fill="#58b0e4" />
      <path d="M2 5c3-1 6 1 9 2-3 1-3 3-1 4l-3 3c1 5 9 5 11 1 2-3 0-9-3-12 8 2 11 9 7 15-5 8-17 7-20-1C1 13 1 9 2 5Z" fill="#f08a1f" />
      <path d="M18 3c5 3 7 9 4 15-3 5-8 6-12 5 9-1 13-9 8-20Z" fill="#f8c43c" />
    </>
  )],
  ["Chrome", (
    <>
      <path d="M12 12 1.600 6A12 12 0 0 1 22.400 6Z" fill="#df4a3c" />
      <path d="M12 12 22.400 6A12 12 0 0 1 12 24Z" fill="#fbcb2f" />
      <path d="M12 12v12A12 12 0 0 1 1.600 6Z" fill="#2c9e52" />
      <path d="M12 6h10.400L17 15ZM12 6 6 14 1.600 6Z" fill="#df4a3c" />
      <path d="M22.400 6H12l5 9-5 9c10 0 14-10 10.400-18Z" fill="#fbcb2f" />
      <circle cx="12" cy="12" r="5.700" fill="#fff" />
      <circle cx="12" cy="12" r="4.500" fill="#3e7de8" />
    </>
  )],
  ["QGIS", <QgisLogo />, "bg-white/30 border-white/90"],
  ["VLC", (
    <>
      <path d="M3 18h18l2 5H1Z" fill="#ee7d15" />
      <path d="m11 1h3l5 18c-3 2-10 2-13 0Z" fill="#ef8218" />
      <path d="m9.300 7-1.200 4h8.800l-1.200-4ZM7 15l-1 3c3 2.500 10 2.500 13 0l-1-3Z" fill="#e9e9e9" />
    </>
  ), "bg-white/15 border-white/30"],
];

const glitch =
  "bg-[repeating-linear-gradient(180deg,#6b4a6d_0px,#6b4a6d_1px,#8fa08f_1px,#8fa08f_2px,#3f5474_2px,#3f5474_3px,#b98fb0_3px,#b98fb0_4px)]";

const menus = ["Project", "Edit", "View", "Layer", "Settings", "Plugins", "Vector", "Raster", "Database", "Web", "SCP", "Processing", "Help"];

export default function App() {
  return (
    <div className="relative flex min-h-screen flex-col overflow-hidden bg-[#efefef] font-['DejaVu_Sans_Condensed','DejaVu_Sans',sans-serif] text-[10px] leading-4 text-black">
      <header className="flex h-[22px] items-start border-b border-[#7ba3c8] bg-[#89b4de]">
        <div className="flex flex-1 pl-0.5 pt-0.5"><Svg className="size-4"><QgisLogo /></Svg></div>
        <h1 className="font-['Open_Sans',sans-serif] text-[13px] leading-[21px] text-[#1c2630]">QGIS 2.18.9</h1>
        <div className="flex flex-1 justify-end pr-[5px]">
          <button aria-label="Minimize" className="flex h-[18px] w-6 items-center justify-center">
            <svg viewBox="0 0 8 8" aria-hidden="true" className="size-2"><path d="M0 6h8" stroke="#111" strokeWidth="2" /></svg>
          </button>
          <button aria-label="Restore" className="flex h-[18px] w-[25px] items-center justify-center">
            <svg viewBox="0 0 10 10" fill="none" aria-hidden="true" className="size-[10px]"><path d="M2.500 2.500v-2h7v6h-2M.5 2.500h7v6h-7Z" stroke="#111" /><path d="M0 3h8" stroke="#111" /></svg>
          </button>
          <button aria-label="Close" className="flex h-[18px] w-[39px] items-center justify-center bg-[#c75050]">
            <svg viewBox="0 0 8 8" aria-hidden="true" className="size-2"><path d="m1 1 6 6m0-6L1 7" stroke="#fff" strokeWidth="1.800" /></svg>
          </button>
        </div>
      </header>

      <nav className="flex h-[21px] items-center border-b border-[#c3c3c3] pl-px pt-0.5">
        {menus.map((m) => <button key={m} className="px-[7px]">{m}</button>)}
      </nav>

      <div className="flex h-[37px] items-center border-b border-[#c3c3c3] pl-[5px]">
        <GripV />
        <Tools className="w-[197px]" names="new open save saveAs layoutNew layoutMgr" />
        <span className="ml-[6px]" /><GripV />
        <Tools className="w-[460px]" names="touch pan panSel zoomIn zoomOut zoomNative zoomFull zoomSel zoomLayer zoomLast zoomNext bookmarkNew bookmarks refresh" />
        <span className="ml-[7px]" /><GripV />
        <Tools className="w-[418px]" names="identify action v select V selectExpr V deselect table calc sum measure V tip text V" />
        <span className="ml-[6px]" /><GripV />
        <Tools className="w-[33px]" names="help" />
      </div>

      <div className="flex h-9 items-center border-b border-[#c3c3c3] pl-[5px]">
        <GripV />
        <Tools className="w-[372px]" names="edits pencil saveEdits addRow addCurve v moveFeature nodeTool trash cut copy paste" />
        <span className="ml-[5px]" /><GripV />
        <Tools className="w-[265px]" names="label diagram labelPin labelHold labelShow labelMove labelRot labelEdit" />
        <span className="ml-[6px]" /><GripV />
        <Tools className="w-[33px]" names="database" />
        <span className="ml-[7px]" /><GripV />
        <Tools className="w-[33px]" names="coordinate" />
        <span className="ml-[7px]" /><GripV />
        <Tools className="w-[66px]" names="python webGlobe" />
      </div>

      <div className="flex h-[37px] items-center border-b border-[#b9b9b9] pl-[5px]">
        <GripV />
        <Tools className="w-[602px]" names="setSquare magnet undo redo rotateF simplify addRing addPart fillRing delRing delPart reshape offset split splitParts merge mergeAttr rotatePt v" />
        <span className="ml-[7px]" /><GripV />
        <Tools className="w-[328px]" names="histo histoFull histo2 histoFull2 brightUp brightDown contrastUp contrastDown grid zonal" />
        <div className="ml-auto flex shrink-0 items-center">
          <GripV /><Tools className="w-[33px]" names="layers" /><More />
          <span className="ml-[2px]" /><GripV /><Tools className="w-[33px]" names="raster" /><More />
          <GripV /><Tools className="w-[32px]" names="semiAuto" /><More />
        </div>
      </div>

      <main className="flex min-h-[502px] flex-1">
        <div className="flex w-[49px] shrink-0 flex-col border-r border-[#c6c6c6] pt-1">
          <GripH className="mx-1" />
          {sideIcons.map(([label, art, menu]) => (
            <div key={label} className="flex h-8 items-center gap-[5px] pl-[7px]">
              <button aria-label={label}><Svg>{art}</Svg></button>
              {menu && <button aria-label={`${label} options`}><Caret /></button>}
            </div>
          ))}
          <GripH className="mx-1 mt-2" />
          {pluginIcons.map(([label, art]) => (
            <button key={label} aria-label={label} className="flex h-8 items-center justify-center"><Svg>{art}</Svg></button>
          ))}
        </div>

        <aside className="flex w-[268px] shrink-0 flex-col">
          <div className="flex h-[17px] items-center gap-2 pl-[2px] pr-px">
            <GripH className="flex-1" />
            <h2>Layers Panel</h2>
            <GripH className="flex-1" />
            <div className="-ml-2 flex gap-[2px] pl-1">
              <button aria-label="Float panel" className="flex size-3 items-center justify-center rounded-xs border border-[#555] bg-[#f5f5f5]">
                <svg viewBox="0 0 8 8" fill="none" aria-hidden="true" className="size-2"><path d="M3 3V1h4.500v4h-2M.5 3.500h4.500v4H.5Z" stroke="#000" strokeWidth="1.200" /></svg>
              </button>
              <button aria-label="Close panel" className="flex size-3 items-center justify-center rounded-xs border border-[#555] bg-[#f5f5f5]">
                <svg viewBox="0 0 8 8" aria-hidden="true" className="size-2"><path d="m.5.5 7 7m0-7-7 7" stroke="#000" strokeWidth="1.400" /></svg>
              </button>
            </div>
          </div>
          <div className="flex h-8 items-center pl-[2px]">
            {[
              ["Style", <><path d="m10 13 9-11 3 3-9 10Z" fill="#d8a234" /><path d="M2 11c5 3 7 0 9 1l4 4c-2 4-6 6-9 6-1-4-4-6-4-11Z" fill="#e9b53f" /><path d="m3 12 10 4-4-5Z" fill="#d64934" /></>],
              ["Add group", <><path d="M7 5h10v14H7ZM3 9h10v13H3Z" fill="#f1f1f1" stroke="#666" strokeWidth="1.400" /><path d="M12 15V2M9 5l3-3 3 3" stroke="#355f91" strokeWidth="1.800" /><Plus /></>],
              ["Visibility", <><path d="M1 12c5-8 16-8 21 0-5 6-16 6-21 0Z" fill="#d9dfe6" stroke="#777" strokeWidth="1.300" /><circle cx="12" cy="11" r="4.500" fill="#5680ac" /><circle cx="12" cy="11" r="2" fill="#1e3550" /><path d="M17 20h7l-3.500 3.500Z" fill="#000" /></>],
              ["Filter", <><path d="M2 4h20l-8 9v9h-4v-9Z" fill="#5f8dbe" stroke="#3d658f" /><path d="M2 2h20v4H2Z" fill="#ecd54a" stroke="#b79f2c" /></>],
              ["Expression filter", <><path d="M12 3C9 0 3 2 4 6c.5 2 3 2.500 6 2.500-5 0-7 1-6.500 4 .500 4 7 4 10 1" stroke="#6c3a80" strokeWidth="2.300" /><path d="M13 22v-6c0-3 8-3 8 0v6M15 22v-5M19 22v-5" stroke="#888" strokeWidth="1.500" /></>, true],
              ["Expand all", <><path d="M3 3h3v3H3ZM3 10h3v3H3ZM3 17h3v3H3Z" fill="#e0ad35" /><path d="M6 3h8M8 11h6M8 18h6" stroke="#666" strokeWidth="2" /><path d="M14 3h5v11h4l-6.500 8-6.500-8h4Z" fill={BL} stroke="#345e8d" /></>],
              ["Collapse all", <><path d="M3 3h3v3H3ZM3 10h3v3H3ZM3 17h3v3H3Z" fill="#e0ad35" /><path d="M6 3h8M8 11h6M8 18h6" stroke="#666" strokeWidth="2" /><path d="M14 22h5V11h4l-6.500-9L10 11h4Z" fill={BL} stroke="#345e8d" /></>],
              ["Remove layer", <><rect x="3" y="3" width="16" height="16" fill="#eaeaea" stroke="#777" strokeWidth="1.500" /><Badge fill="#d14a54"><path d="M2 4.750h5.500" stroke="#fff" strokeWidth="2" /></Badge></>],
            ].map(([label, art, menu]) => (
              <React.Fragment key={label}>
                <button aria-label={label} className="flex w-[25px] justify-center"><Svg className="size-4">{art}</Svg></button>
                {menu && <button aria-label="Filter options" className="flex w-[13px] justify-center"><Caret /></button>}
              </React.Fragment>
            ))}
          </div>
          <ul className="flex-1 rounded-xs border-2 border-[#5b9fe6] bg-white font-bold">
            <li className="flex h-[14px] items-center bg-[#3394fb] text-white">
              <span className="ml-[10px] h-[14px] w-2 border-l border-dotted border-[#7d97b5]" />
              <Svg className="ml-1 size-[14px]"><path d="M1 2h22v20H1Z" fill="#b5c8dc" /><path d="M1 7h22M1 12h22M1 17h22M12 2v20" stroke="#5b7fa5" strokeWidth="2" /></Svg>
              <span className="ml-[6px] underline">SOURADEEP</span>
            </li>
            <li className="flex h-4 items-center">
              <span className="mb-2 ml-[10px] h-2 w-2 border-b border-l border-dotted border-[#999]" />
              <span className="ml-[3px] flex"><CheckX label="Show dist pop" /></span>
              <span className="ml-[7px] size-[15px] border border-[#6a8f3c] bg-[#85c237]" />
              <span className="ml-[6px]">dist pop</span>
            </li>
          </ul>
        </aside>
        <div className="flex w-[6px] shrink-0 items-center justify-center">
          <span className={`h-[162px] w-1 bg-[length:4px_5px] ${dots}`} />
        </div>

        <section aria-label="Map canvas" className="min-w-0 flex-1 border-y border-l border-[#b5b5b5] bg-white">
          <DistrictMap />
        </section>
      </main>

      <footer className="flex h-7 items-center justify-end whitespace-nowrap">
        <label htmlFor="coord">Coordinate</label>
        <input id="coord" defaultValue="82.25,26.04" className="ml-1 h-[18px] w-[133px] rounded-xs border border-[#b3b3b3] bg-white text-center text-[11px]" />
        <button aria-label="Toggle extents" className="ml-[3px]">
          <Svg className="size-[18px]"><path d="M5 3h5l3 4-2 7-4-1-4-6Z" fill="#eee" stroke="#222" strokeWidth="1.600" /><path d="M3 2l9 13M10 3 5 12M2 13c2 6 8 8 12 4M20 3l-8 10M13 12c5-4 9 0 8 4s-6 6-9 3 0-6 4-5M6 8h6" stroke="#333" strokeWidth="1.800" /></Svg>
        </button>
        <label htmlFor="scale" className="ml-[11px]">Scale</label>
        <div className="ml-1 grid h-5 w-[83px] rounded-xs border border-[#a9a9a9] bg-white">
          <select id="scale" className="col-start-1 row-start-1 appearance-none pl-1 text-[11px] outline-none"><option>1:3,427,962</option></select>
          <span className="pointer-events-none col-start-1 row-start-1 flex w-[15px] items-center justify-center justify-self-end border-l border-[#bdbdbd] bg-[#f0f0f0]"><Caret /></span>
        </div>
        <button aria-label="Lock scale" className="ml-[5px]">
          <Svg className="size-4"><path d="M7 11V7c0-7 10-7 10 0v4" stroke="#777" strokeWidth="2.500" /><rect x="4" y="10.500" width="16" height="12" rx="1" fill="#555" /></Svg>
        </button>
        <span className="ml-[11px]">Magnifier</span>
        <span className="ml-[5px]"><Spin label="Magnifier" value="100%" /></span>
        <span className="ml-3">Rotation</span>
        <span className="ml-2"><Spin label="Rotation" value="0.0" /></span>
        <label className="ml-[6px] flex items-center gap-[5px]"><CheckX label="Render" />Render</label>
        <button className="ml-[18px] flex items-center gap-1">
          <Svg className="size-[15px]"><circle cx="12" cy="12" r="9" fill="#d5d5d5" stroke="#888" strokeWidth="3" /><path d="M12 0v24M0 12h24M7 5c-3 5-3 9 0 14M17 5c3 5 3 9 0 14" stroke="#888" strokeWidth="1.500" /></Svg>
          EPSG:4326
        </button>
        <button aria-label="Messages" className="ml-5 mr-3">
          <Svg className="size-4"><path d="M12 3c15 0 15 14 5 15l2 5-7-5C-3 18-3 3 12 3Z" fill="#666" /><path d="M5.500 10.500h3M10.500 10.500h3M15.500 10.500h3" stroke="#fff" strokeWidth="2.500" /></Svg>
        </button>
      </footer>

      <div className="relative flex h-[37px] items-center bg-[#4b6179] font-['Open_Sans',sans-serif] text-white">
        <svg aria-hidden="true" className="absolute inset-0 h-full w-full opacity-40">
          <filter id="water" x="0" y="0" width="100%" height="100%">
            <feTurbulence type="fractalNoise" baseFrequency=".025 .05" numOctaves="4" seed="7" />
            <feColorMatrix values="0.6 0 0 0 0.02  0 0.6 0 0 0.12  0 0 0.5 0 0.24  0 0 0 0 1" />
            <feColorMatrix type="saturate" values="0.5" />
          </filter>
          <rect width="100%" height="100%" filter="url(#water)" />
        </svg>
        <div className="relative flex flex-1 items-center">
          <button aria-label="Start" className="flex w-[46px] shrink-0 justify-center">
            <Svg className="size-[26px]"><path d="M0 3.500 9.500 2.200v9.300H0ZM10.500 2 23.500.3v11.200h-13ZM0 12.500h9.500v9.300L0 20.500ZM10.500 12.500h13v11.200L10.500 22Z" fill="#fff" /></Svg>
          </button>
          <div className="ml-[3px] flex gap-1">
            {tasks.map(([label, art, active]) => (
              <button key={label} aria-label={label} className={`flex h-[37px] w-[54px] shrink-0 items-center justify-center border ${active || "border-transparent"}`}>
                <Svg className={label === "Dropbox" || label === "Splash" ? "size-[30px]" : "size-7"}>{art}</Svg>
              </button>
            ))}
          </div>
          <div className="ml-auto flex items-center pr-4">
            <button aria-label="Help" className="flex">
              <Svg className="size-[22px]"><circle cx="12" cy="12" r="10" fill="#2395d3" stroke="#fff" strokeWidth="2.300" /><text x="8" y="17.500" fontSize="15" fontWeight="bold" fill="#fff" fontFamily="Open Sans, sans-serif">?</text></Svg>
            </button>
            <button aria-label="Show hidden icons" className="ml-3 flex w-2"><svg viewBox="0 0 8 4" aria-hidden="true" className="h-1 w-2"><path d="M0 4h8L4 0Z" fill="#fff" /></svg></button>
            <button aria-label="Action center" className="ml-3 flex"><Svg className="size-4"><path d="M2 2h2v21H2ZM5 4c5-2 6 3 10 1l8 2-2 7h-6c-4-1-6-2-10 0Z" fill="#fff" /></Svg></button>
            <button aria-label="Battery" className="ml-2 flex"><Svg className="size-4"><path d="M9 1h6v3h3v19H6V4h3Z" fill="#fff" /><path d="M8.500 7h7v13.500h-7Z" fill="#3d4f62" /><path d="M10.500 10h3v8h-3Z" fill="#fff" /></Svg></button>
            <button aria-label="Network" className="ml-[5px] flex"><Svg className="size-[15px]"><path d="M0 18h3.500v5H0ZM5 15h3.500v8H5ZM10 11h3.500v12H10ZM15 7h3.500v16H15ZM20 2h3.500v21H20Z" fill="#fff" /></Svg></button>
            <button aria-label="Dropbox status" className="ml-2 flex"><Svg className="size-4"><path d="m7 1 5 3.500L7 8 2 4.500ZM17 1l5 3.500L17 8l-5-3.500ZM7 8l5 3.500L7 15l-5-3.500ZM17 8l5 3.500L17 15l-5-3.500ZM12 14l5 4-5 3.500L7 18Z" fill="#fff" /><circle cx="17" cy="17" r="6" fill="#2fa344" /><path d="m14 17 2.300 2.500L20 15" stroke="#fff" strokeWidth="1.800" /></Svg></button>
            <time className="ml-4 whitespace-nowrap text-center text-[10px] leading-4"><span className="block">14:30</span><span className="block">13-07-2017</span></time>
          </div>
        </div>
      </div>

      <span className={`absolute right-0 top-0 h-5 w-[5px] ${glitch}`} />
      <span className={`absolute right-0 top-[561px] h-[62px] w-[5px] [clip-path:polygon(0_0,100%_16%,100%_100%,0_96%)] ${glitch}`} />
      <span className={`absolute bottom-[86px] right-[2px] h-[6px] w-[3px] rounded-full ${glitch}`} />
      <span className={`absolute bottom-0 right-0 h-12 w-1 opacity-50 ${glitch}`} />
    </div>
  );
}
